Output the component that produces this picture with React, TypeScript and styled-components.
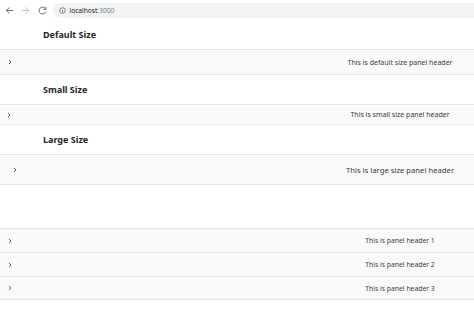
import React from "react";
import styled, { createGlobalStyle } from "styled-components";

const Global = createGlobalStyle`
  html, body { margin: 0; padding: 0; background: #fff; }
  body { font-family: "Noto Sans", "Open Sans", sans-serif; }
`;

const Page = styled.div`
  width: 474px;
  height: 315px;
  overflow: hidden;
  display: flex;
  flex-direction: column;
`;

const Chrome = styled.div`
  height: 20px;
  display: flex;
  align-items: center;
  padding-left: 1px;
  box-sizing: border-box;
`;

const NavBtn = styled.div<{ $dim?: boolean }>`
  width: 16.5px;
  height: 16px;
  display: flex;
  align-items: center;
  justify-content: center;
  color: ${(p) => (p.$dim ? "#b8b8b8" : "#5f6368")};
`;

const Omnibox = styled.div`
  flex: 1;
  height: 15px;
  margin-left: 2px;
  background: #f1f3f4;
  border-radius: 8px 0 0 8px;
  display: flex;
  align-items: center;
  padding-left: 6px;
  gap: 4px;
  font-size: 6.6px;
  color: #202124;
`;

const Port = styled.span`
  color: #80868b;
`;

const Content = styled.div`
  display: flex;
  flex-direction: column;
`;

const Heading = styled.div`
  height: 29px;
  display: flex;
  align-items: center;
  padding-left: 43px;
  font-weight: 700;
  font-size: 9px;
  color: #262626;
`;

const Spacer = styled.div`
  height: 43px;
`;

const Group = styled.div`
  display: flex;
  flex-direction: column;
  border-top: 1px solid #e6e6e6;
`;

const Row = styled.div<{ $h: number; $indent: number; $fs: number }>`
  height: ${(p) => p.$h}px;
  box-sizing: border-box;
  background: #fafafa;
  border-bottom: 1px solid #e6e6e6;
  display: flex;
  align-items: center;
  padding-left: ${(p) => p.$indent}px;
  font-size: ${(p) => p.$fs}px;
  color: #3a3a3a;
`;

const Label = styled.div`
  margin-left: auto;
  width: 148px;
  text-align: center;
  white-space: nowrap;
`;

const Chevron = () => (
  <svg width="6" height="6" viewBox="0 0 6 6">
    <path d="M2 1 L4 3 L2 5" fill="none" stroke="#555" strokeWidth="0.9" />
  </svg>
);

const Section = ({
  title,
  label,
  h,
  indent,
  fs,
}: {
  title: string;
  label: string;
  h: number;
  indent: number;
  fs: number;
}) => (
  <>
    <Heading>{title}</Heading>
    <Group>
      <Row $h={h} $indent={indent} $fs={fs}>
        <Chevron />
        <Label>{label}</Label>
      </Row>
    </Group>
  </>
);

export default function App() {
  return (
    <Page>
      <Global />
      <Chrome>
        <NavBtn>
          <svg width="9" height="9" viewBox="0 0 10 10">
            <path d="M9 5 H1.5 M5 1.5 L1.5 5 L5 8.5" fill="none" stroke="currentColor" strokeWidth="1" />
          </svg>
        </NavBtn>
        <NavBtn $dim>
          <svg width="9" height="9" viewBox="0 0 10 10">
            <path d="M1 5 H8.5 M5 1.5 L8.5 5 L5 8.5" fill="none" stroke="currentColor" strokeWidth="1" />
          </svg>
        </NavBtn>
        <NavBtn>
          <svg width="9" height="9" viewBox="0 0 10 10">
            <path d="M8.3 3.2 A3.8 3.8 0 1 0 8.6 6.2" fill="none" stroke="currentColor" strokeWidth="1" />
            <path d="M8.8 1 V3.8 H6" fill="none" stroke="currentColor" strokeWidth="1" />
          </svg>
        </NavBtn>
        <Omnibox>
          <svg width="7" height="7" viewBox="0 0 10 10">
            <circle cx="5" cy="5" r="4" fill="none" stroke="#5f6368" strokeWidth="1.1" />
            <path d="M5 4.3 V7.3" stroke="#5f6368" strokeWidth="1.1" />
            <circle cx="5" cy="2.9" r="0.6" fill="#5f6368" />
          </svg>
          <span>
            localhost<Port>:3000</Port>
          </span>
        </Omnibox>
      </Chrome>
      <Content>
        <Section title="Default Size" label="This is default size panel header" h={25} indent={7} fs={7} />
        <Section title="Small Size" label="This is small size panel header" h={20} indent={6} fs={7} />
        <Section title="Large Size" label="This is large size panel header" h={30} indent={12} fs={7.7} />
        <Spacer />
        <Group>
          <Row $h={24} $indent={7} $fs={6.8}>
            <Chevron />
            <Label>This is panel header 1</Label>
          </Row>
          <Row $h={24} $indent={7} $fs={6.8}>
            <Chevron />
            <Label>This is panel header 2</Label>
          </Row>
          <Row $h={23} $indent={7} $fs={6.8}>
            <Chevron />
            <Label>This is panel header 3</Label>
          </Row>
        </Group>
      </Content>
    </Page>
  );
}
